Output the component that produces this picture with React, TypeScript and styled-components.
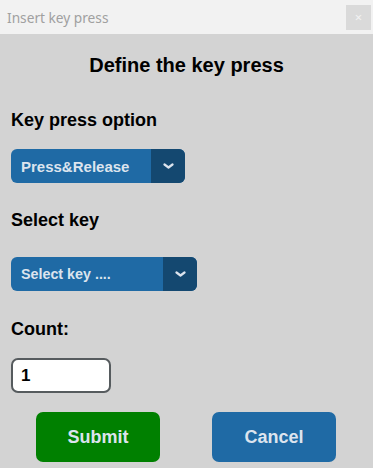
import { createGlobalStyle } from 'styled-components';
import styled from 'styled-components';

const GlobalStyle = createGlobalStyle`
    html, body {
        margin: 0;
        padding: 0;
        background: #d3d3d3;
    }
    * {
        box-sizing: border-box;
    }
`;

const Window = styled.div`
    width: 373px;
    height: 468px;
    display: flex;
    flex-direction: column;
    background: #d3d3d3;
    font-family: 'Liberation Sans', Arial, sans-serif;
    overflow: hidden;
`;

const TitleBar = styled.div`
    height: 34px;
    flex: none;
    display: flex;
    align-items: center;
    justify-content: space-between;
    padding: 0 2px 0 7px;
    background: #f2f2f2;
`;

const TitleText = styled.div`
    font-family: 'Noto Sans', 'Open Sans', sans-serif;
    font-size: 13.7px;
    color: #a0a0a0;
`;

const CloseButton = styled.div`
    width: 25px;
    height: 25px;
    display: flex;
    align-items: center;
    justify-content: center;
    background: #dadada;
    color: #f2f2f2;
    font-family: 'Noto Sans', sans-serif;
    font-size: 13px;
`;

const Body = styled.div`
    display: flex;
    flex-direction: column;
    align-items: flex-start;
    padding: 0 11px;
`;

const Heading = styled.div`
    align-self: stretch;
    margin-top: 20px;
    text-align: center;
    font-size: 20px;
    line-height: 23px;
    font-weight: 700;
    color: #000;
`;

const Label = styled.div<{ $gap: number }>`
    margin-top: ${(p) => p.$gap}px;
    font-size: 18px;
    line-height: 20px;
    font-weight: 700;
    color: #000;
`;

const Select = styled.div<{ $width: number; $gap: number; $size: number }>`
    margin-top: ${(p) => p.$gap}px;
    width: ${(p) => p.$width}px;
    height: 34px;
    display: flex;
    border-radius: 6px;
    overflow: hidden;
    background: #1f6aa5;
    color: #dce4ee;
    font-size: ${(p) => p.$size}px;
    font-weight: 700;
`;

const SelectValue = styled.div`
    flex: 1;
    display: flex;
    align-items: center;
    padding-left: 10px;
`;

const SelectArrow = styled.div`
    width: 34px;
    display: flex;
    align-items: center;
    justify-content: center;
    background: #144870;

    & > svg {
        width: 11px;
        height: 6px;
    }
`;

const CountInput = styled.div`
    margin-top: 19px;
    width: 100px;
    height: 35px;
    display: flex;
    align-items: center;
    padding-left: 8px;
    border: 2px solid #565b5e;
    border-radius: 7px;
    background: #fff;
    font-size: 17px;
    font-weight: 700;
    color: #000;
`;

const ButtonRow = styled.div`
    align-self: stretch;
    margin-top: 19px;
    display: flex;
    justify-content: space-between;
    padding: 0 26px 0 25px;
`;

const Button = styled.div<{ $color: string }>`
    width: 124px;
    height: 50px;
    display: flex;
    align-items: center;
    justify-content: center;
    border-radius: 7px;
    background: ${(p) => p.$color};
    color: #dce4ee;
    font-size: 18px;
    font-weight: 700;
`;

function Chevron() {
    return (
        <svg viewBox="0 0 11 6" fill="none" stroke="#dce4ee" strokeWidth="2.2" strokeLinecap="round" strokeLinejoin="round">
            <path d="M1.5 1.5L5.5 4.5L9.5 1.5" />
        </svg>
    );
}

export default function App() {
    return (
        <>
            <GlobalStyle />
            <Window>
                <TitleBar>
                    <TitleText>Insert key press</TitleText>
                    <CloseButton>×</CloseButton>
                </TitleBar>
                <Body>
                    <Heading>Define the key press</Heading>
                    <Label $gap={33}>Key press option</Label>
                    <Select $width={174} $gap={19} $size={15}>
                        <SelectValue>Press&amp;Release</SelectValue>
                        <SelectArrow>
                            <Chevron />
                        </SelectArrow>
                    </Select>
                    <Label $gap={27}>Select key</Label>
                    <Select $width={186} $gap={27} $size={14.3}>
                        <SelectValue>Select key ....</SelectValue>
                        <SelectArrow>
                            <Chevron />
                        </SelectArrow>
                    </Select>
                    <Label $gap={28}>Count:</Label>
                    <CountInput>1</CountInput>
                    <ButtonRow>
                        <Button $color="#008000">Submit</Button>
                        <Button $color="#1f6aa5">Cancel</Button>
                    </ButtonRow>
                </Body>
            </Window>
        </>
    );
}
